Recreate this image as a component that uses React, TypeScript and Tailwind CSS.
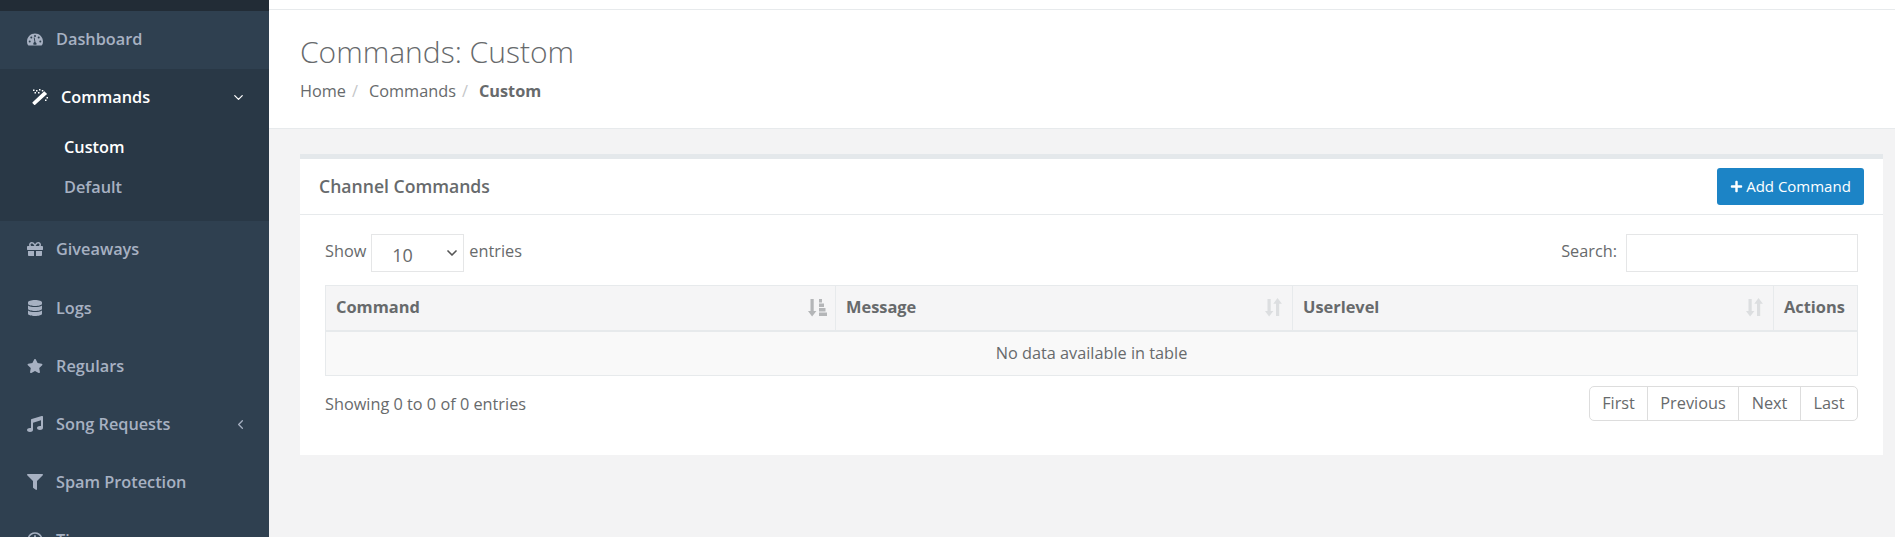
import { FaGift, FaDatabase, FaStar, FaMusic, FaFilter, FaRegClock, FaPlus } from 'react-icons/fa';
import { LuChevronDown, LuChevronLeft } from 'react-icons/lu';
import type { ComponentType } from 'react';

function GaugeIcon({ className }: { className?: string }) {
  return (
    <svg viewBox="0 0 16 16" className={className}>
      <path fill="currentColor" d="M8 2.500C3.600 2.500 0 6 0 10.400c0 1.300.3 2.500.9 3.600.1.300.4.500.7.500h12.800c.3 0 .6-.2.700-.5.600-1.100.9-2.300.9-3.600C16 6 12.400 2.500 8 2.500z" />
      <g fill="#2f4050">
        <circle cx="8" cy="5" r="1" />
        <circle cx="4.300" cy="6.600" r="1" />
        <circle cx="11.700" cy="6.600" r="1" />
        <circle cx="2.700" cy="10.400" r="1" />
        <circle cx="13.300" cy="10.400" r="1" />
        <path d="M6.700 6.600l.9-.2.900 4.800c.7.300 1.100.9 1.100 1.600 0 .4-.1.700-.3 1H6.600c-.2-.3-.3-.6-.3-1 0-.8.500-1.500 1.200-1.700z" />
      </g>
    </svg>
  );
}

function WandIcon({ className }: { className?: string }) {
  return (
    <svg viewBox="0 0 16 16" className={className} fill="currentColor">
      <path d="M12.300 2.200l2.800 2.800L3.200 15.800c-.3.300-.8.300-1.100 0L.6 14.300c-.3-.3-.3-.8 0-1.100z" />
      <path d="M1 0.500h1.500v1.500H1zM4 1h1.500v1.500H4zM7 0h1.500v1.500H7zM9.800 1h1.500v1.500H9.800zM2.500 3h1.500v1.500H2.500zM6 3h1.500v1.500H6zM14.500 8h1.500v1.500h-1.500zM13 10.500h1.500V12H13z" />
    </svg>
  );
}

function NavItem({ icon: Icon, label, arrow, tight }: { icon: ComponentType<{ className?: string }>; label: string; arrow?: boolean; tight?: boolean }) {
  return (
    <div className={`h-[58px] shrink-0 flex items-center pl-[27px] pr-[21px] text-[#a7b1c2] font-semibold text-[16.3px] ${tight ? 'pb-[2px]' : ''}`}>
      <span className="w-[29px] flex items-center">
        <Icon className="w-[16px] h-[16px]" />
      </span>
      <span className="flex-1">{label}</span>
      {arrow && <LuChevronLeft className="w-[15px] h-[15px]" />}
    </div>
  );
}

function SortBoth() {
  return (
    <svg viewBox="0 0 17 19" className="w-[17px] h-[19px] text-[#dcdee0]" fill="currentColor">
      <path d="M2.500 1h3.200v12h2.700L4.100 18.500 0 13h2.500z" />
      <path d="M12.500 0l4.400 5.800h-2.700V18H11V5.800H8.300z" />
    </svg>
  );
}

function SortAsc() {
  return (
    <svg viewBox="0 0 19 19" className="w-[19px] h-[19px] mr-[-2px] text-[#b4b6b8]" fill="currentColor">
      <path d="M2.500 1h3.200v12h2.700L4.100 18.500 0 13h2.500z" />
      <path d="M11 1h3v3.500h-3zM11 5.500h5v3.500h-5zM11 10h6.500v3.500H11zM11 14.500h8V18h-8z" />
    </svg>
  );
}

function Th({ label, sort, last }: { label: string; sort?: 'asc' | 'both'; last?: boolean }) {
  return (
    <th className={`h-[46px] px-[10px] bg-[#f5f5f6] border-b-[2px] border-[#e7eaec] text-left font-bold text-[16.4px] ${last ? '' : 'border-r'}`}>
      <div className="flex items-center justify-between">
        <span className="mb-[2px]">{label}</span>
        {sort === 'asc' && <SortAsc />}
        {sort === 'both' && <SortBoth />}
      </div>
    </th>
  );
}

export default function App() {
  return (
    <div className="flex h-[537px] overflow-hidden bg-[#f3f3f4] text-[#676a6c] text-[16.3px] font-['Open_Sans',sans-serif]">
      {/* sidebar */}
      <aside className="w-[269px] shrink-0 bg-[#2f4050] flex flex-col">
        <div className="h-[11px] shrink-0 bg-[#222c36]" />
        <NavItem icon={GaugeIcon} label="Dashboard" tight />
        <div className="h-[152px] shrink-0 bg-[#293846]">
          <div className="h-[56px] flex items-center pl-[32px] pr-[24px] text-white font-semibold text-[16.3px]">
            <WandIcon className="w-[16px] h-[16px] mr-[13px]" />
            <span className="flex-1">Commands</span>
            <LuChevronDown className="w-[15px] h-[15px] mr-[-1px]" />
          </div>
          <div className="h-[40px] mt-[2px] flex items-center pl-[64px] text-white font-semibold">Custom</div>
          <div className="h-[40px] flex items-center pl-[64px] text-[#a7b1c2] font-semibold">Default</div>
        </div>
        <NavItem icon={FaGift} label="Giveaways" tight />
        <NavItem icon={FaDatabase} label="Logs" />
        <NavItem icon={FaStar} label="Regulars" />
        <NavItem icon={FaMusic} label="Song Requests" arrow />
        <NavItem icon={FaFilter} label="Spam Protection" />
        <NavItem icon={FaRegClock} label="Timers" />
      </aside>

      <main className="flex-1 min-w-0 flex flex-col">
        <div className="h-[10px] shrink-0 bg-white border-b border-[#e7eaec]" />
        {/* page heading */}
        <div className="h-[119px] shrink-0 bg-white border-b border-[#e7eaec] pl-[31px] pt-[22px]">
          <h2 className="text-[30px] leading-[40px] font-light">Commands: Custom</h2>
          <div className="flex items-center mt-[8px] leading-[22px]">
            <span>Home</span>
            <span className="text-[#c4c6c8] ml-[6px] mr-[11px]">/</span>
            <span>Commands</span>
            <span className="text-[#c4c6c8] ml-[6px] mr-[11px]">/</span>
            <span className="font-bold">Custom</span>
          </div>
        </div>

        {/* card */}
        <section className="ml-[31px] mr-[12px] mt-[25px] h-[301px] shrink-0 bg-white border-t-[5px] border-[#e4e8eb]">
          <div className="h-[56px] border-b border-[#e7eaec] flex items-center justify-between pl-[19px] pr-[19px]">
            <h5 className="font-semibold text-[17.6px]">Channel Commands</h5>
            <button className="h-[37px] w-[147px] bg-[#1c84c6] rounded-[3px] text-white flex items-center justify-center text-[15px]">
              <FaPlus className="w-[13px] h-[13px] mr-[3px]" />
              Add Command
            </button>
          </div>
          <div className="px-[25px] pt-[19px]">
            <div className="flex items-start justify-between h-[51px]">
              <label className="flex items-center">
                <span className="mb-[4px]">Show</span>
                <span className="relative mx-[5px]">
                  <select className="block appearance-none w-[93px] h-[38px] pl-[20px] bg-white border border-[#e5e6e7] text-[18px] pt-[4px]" defaultValue="10">
                    <option>10</option>
                  </select>
                  <LuChevronDown className="absolute right-[4px] top-[11px] w-[16px] h-[16px] text-[#555555] pointer-events-none" strokeWidth={2.5} />
                </span>
                <span className="mb-[4px]">entries</span>
              </label>
              <label className="flex items-center">
                <span className="mr-[9px] mb-[4px]">Search:</span>
                <input className="w-[232px] h-[38px] bg-white border border-[#e5e6e7]" />
              </label>
            </div>
            <table className="w-[1533px] table-fixed border-separate border-spacing-0 border border-[#e7eaec]">
              <colgroup>
                <col className="w-[510px]" />
                <col className="w-[457px]" />
                <col className="w-[481px]" />
                <col className="w-[83px]" />
              </colgroup>
              <thead>
                <tr>
                  <Th label="Command" sort="asc" />
                  <Th label="Message" sort="both" />
                  <Th label="Userlevel" sort="both" />
                  <Th label="Actions" last />
                </tr>
              </thead>
              <tbody>
                <tr>
                  <td colSpan={4} className="h-[43px] bg-[#f9f9f9] text-center">No data available in table</td>
                </tr>
              </tbody>
            </table>
            <div className="flex items-start justify-between mt-[10px]">
              <div className="pt-[7px] leading-[22px]">Showing 0 to 0 of 0 entries</div>
              <div className="flex h-[35px] border border-[#dddddd] rounded-[5px] bg-white">
                <span className="w-[58px] flex items-center justify-center border-r border-[#dddddd]">First</span>
                <span className="w-[91px] flex items-center justify-center border-r border-[#dddddd]">Previous</span>
                <span className="w-[62px] flex items-center justify-center border-r border-[#dddddd]">Next</span>
                <span className="w-[56px] flex items-center justify-center">Last</span>
              </div>
            </div>
          </div>
        </section>
      </main>
    </div>
  );
}
